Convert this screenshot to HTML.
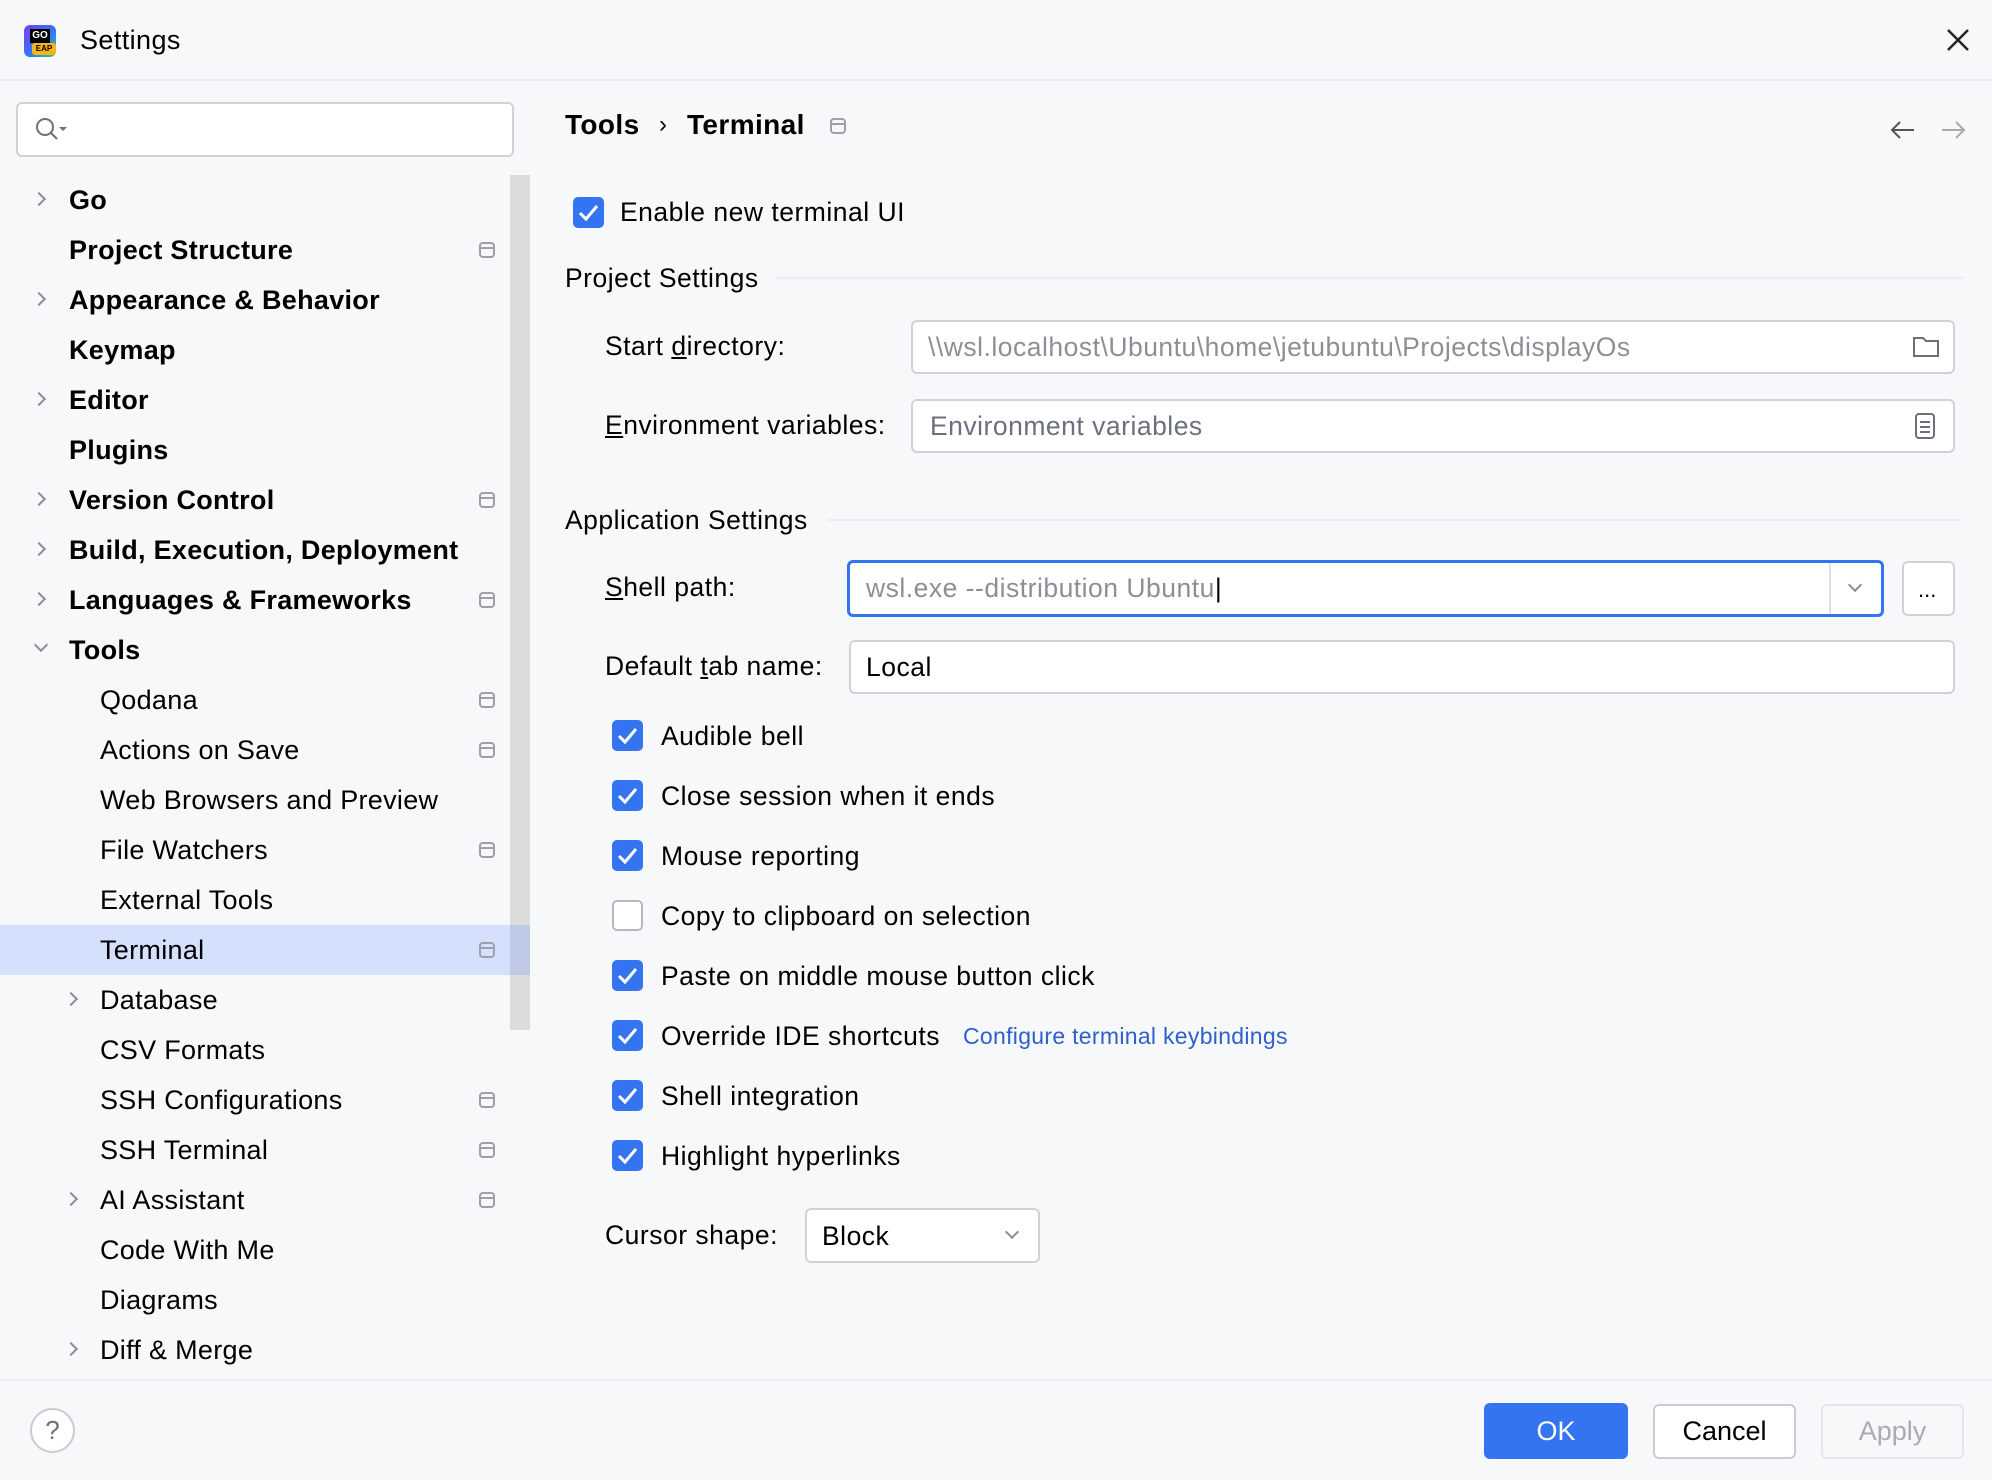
<!DOCTYPE html>
<html><head><meta charset="utf-8"><style>
*{box-sizing:border-box;margin:0;padding:0}
body{width:1992px;height:1480px;background:#f7f8fa;font-family:"Liberation Sans",sans-serif;color:#000;position:relative;overflow:hidden}
.a{position:absolute;white-space:nowrap}
.t{font-size:27px;line-height:50px;height:50px;letter-spacing:0.3px}
.b{font-weight:bold}
.cb{position:absolute;width:31px;height:31px;border-radius:5px;background:#3574f0}
.cb svg{position:absolute;left:5px;top:6px}
.cbo{position:absolute;width:31px;height:31px;border-radius:5px;border:2px solid #b4b8bf;background:#fff}
.lbl{font-size:26.5px;line-height:40px;height:40px;letter-spacing:0.5px}
.fld{position:absolute;background:#fff;border:2px solid #cfd2d8;border-radius:6px}
.pin{position:absolute;width:16px;height:16px;border:2px solid #9da0a8;border-radius:4px}
.pin:after{content:"";position:absolute;left:0;right:0;top:3px;border-top:2px solid #9da0a8}
.chev{position:absolute;width:10px;height:10px;border-right:2px solid #8c8f96;border-top:2px solid #8c8f96;transform:rotate(45deg)}
</style></head><body>
<div class="a" style="left:0;top:79px;width:1992px;border-top:2px solid #ebecf0"></div>
<div class="a" style="left:24px;top:25px;width:32px;height:32px;border-radius:6px;background:linear-gradient(135deg,#7b3df0,#2e7cf6 60%,#35d07f)"></div>
<div class="a" style="left:30px;top:29px;width:20px;height:14px;background:#000;color:#fff;font-size:10px;font-weight:bold;line-height:14px;text-align:center">GO</div>
<div class="a" style="left:32px;top:43px;width:24px;height:12px;background:#f8b515;border-radius:3px;color:#000;font-size:8px;font-weight:bold;line-height:12px;text-align:center">EAP</div>
<div class="a" style="left:80px;top:20px;font-size:27px;line-height:40px;letter-spacing:0.4px">Settings</div>
<svg class="a" style="left:1946px;top:28px" width="24" height="24"><path d="M2 2L22 22M22 2L2 22" stroke="#222" stroke-width="2.5"/></svg>

<div class="fld" style="left:16px;top:102px;width:498px;height:55px"></div>
<svg class="a" style="left:34px;top:116px" width="36" height="28"><circle cx="11" cy="11" r="8" fill="none" stroke="#6c707e" stroke-width="2"/><path d="M17 17L23 23" stroke="#6c707e" stroke-width="2"/><path d="M25 11h8l-4 4z" fill="#6c707e"/></svg>
<div class="a" style="left:510px;top:175px;width:20px;height:855px;background:#dcdcdd"></div>
<div class="a" style="left:0;top:925px;width:530px;height:50px;background:#d4e0fc"></div>
<div class="a" style="left:510px;top:925px;width:20px;height:50px;background:#bfcbe6"></div>

<div class="chev" style="left:34px;top:194px"></div><div class="a t b" style="left:69px;top:175px">Go</div>
<div class="a t b" style="left:69px;top:225px">Project Structure</div><div class="pin" style="left:479px;top:242px"></div>
<div class="chev" style="left:34px;top:294px"></div><div class="a t b" style="left:69px;top:275px">Appearance &amp; Behavior</div>
<div class="a t b" style="left:69px;top:325px">Keymap</div>
<div class="chev" style="left:34px;top:394px"></div><div class="a t b" style="left:69px;top:375px">Editor</div>
<div class="a t b" style="left:69px;top:425px">Plugins</div>
<div class="chev" style="left:34px;top:494px"></div><div class="a t b" style="left:69px;top:475px">Version Control</div><div class="pin" style="left:479px;top:492px"></div>
<div class="chev" style="left:34px;top:544px"></div><div class="a t b" style="left:69px;top:525px">Build, Execution, Deployment</div>
<div class="chev" style="left:34px;top:594px"></div><div class="a t b" style="left:69px;top:575px">Languages &amp; Frameworks</div><div class="pin" style="left:479px;top:592px"></div>
<div class="chev" style="left:36px;top:640px;transform:rotate(135deg)"></div><div class="a t b" style="left:69px;top:625px">Tools</div>
<div class="a t" style="left:100px;top:675px">Qodana</div><div class="pin" style="left:479px;top:692px"></div>
<div class="a t" style="left:100px;top:725px">Actions on Save</div><div class="pin" style="left:479px;top:742px"></div>
<div class="a t" style="left:100px;top:775px">Web Browsers and Preview</div>
<div class="a t" style="left:100px;top:825px">File Watchers</div><div class="pin" style="left:479px;top:842px"></div>
<div class="a t" style="left:100px;top:875px">External Tools</div>
<div class="a t" style="left:100px;top:925px">Terminal</div><div class="pin" style="left:479px;top:942px"></div>
<div class="chev" style="left:66px;top:994px"></div><div class="a t" style="left:100px;top:975px">Database</div>
<div class="a t" style="left:100px;top:1025px">CSV Formats</div>
<div class="a t" style="left:100px;top:1075px">SSH Configurations</div><div class="pin" style="left:479px;top:1092px"></div>
<div class="a t" style="left:100px;top:1125px">SSH Terminal</div><div class="pin" style="left:479px;top:1142px"></div>
<div class="chev" style="left:66px;top:1194px"></div><div class="a t" style="left:100px;top:1175px">AI Assistant</div><div class="pin" style="left:479px;top:1192px"></div>
<div class="a t" style="left:100px;top:1225px">Code With Me</div>
<div class="a t" style="left:100px;top:1275px">Diagrams</div>
<div class="chev" style="left:66px;top:1344px"></div><div class="a t" style="left:100px;top:1325px">Diff &amp; Merge</div>

<div class="a b" style="left:565px;top:105px;font-size:28px;line-height:40px;letter-spacing:0.4px">Tools</div>
<div class="a" style="left:659px;top:105px;font-size:24px;line-height:40px">›</div>
<div class="a b" style="left:687px;top:105px;font-size:28px;line-height:40px;letter-spacing:0.4px">Terminal</div>
<div class="pin" style="left:830px;top:118px"></div>
<svg class="a" style="left:1888px;top:118px" width="80" height="24"><path d="M26 12H4M12 4L4 12L12 20" fill="none" stroke="#555" stroke-width="2"/><path d="M54 12H76M68 4L76 12L68 20" fill="none" stroke="#aaa" stroke-width="2"/></svg>

<div class="cb" style="left:573px;top:197px"><svg width="21" height="19"><path d="M2 10L8 16L19 3" fill="none" stroke="#fff" stroke-width="3"/></svg></div>
<div class="a lbl" style="left:620px;top:192px">Enable new terminal UI</div>

<div class="a lbl" style="left:565px;top:258px">Project Settings</div>
<div class="a" style="left:775px;top:277px;width:1188px;border-top:2px solid #ebecf0"></div>
<div class="a lbl" style="left:605px;top:326px">Start <u>d</u>irectory:</div>
<div class="fld" style="left:911px;top:320px;width:1044px;height:54px"></div>
<div class="a lbl" style="left:928px;top:327px;color:#8c8f96">\\wsl.localhost\Ubuntu\home\jetubuntu\Projects\displayOs</div>
<svg class="a" style="left:1912px;top:334px" width="28" height="24"><path d="M2 4h9l3 3h12v15H2z" fill="none" stroke="#6c707e" stroke-width="2"/></svg>
<div class="a lbl" style="left:605px;top:405px"><u>E</u>nvironment variables:</div>
<div class="fld" style="left:911px;top:399px;width:1044px;height:54px"></div>
<div class="a lbl" style="left:930px;top:406px;color:#6c707e">Environment variables</div>
<svg class="a" style="left:1914px;top:412px" width="22" height="28"><rect x="2" y="2" width="18" height="24" rx="3" fill="none" stroke="#6c707e" stroke-width="2"/><path d="M6 10h10M6 15h10M6 20h10" stroke="#6c707e" stroke-width="2"/></svg>

<div class="a lbl" style="left:565px;top:500px">Application Settings</div>
<div class="a" style="left:828px;top:519px;width:1135px;border-top:2px solid #ebecf0"></div>
<div class="a lbl" style="left:605px;top:567px"><u>S</u>hell path:</div>
<div class="fld" style="left:847px;top:560px;width:1037px;height:57px;border:3px solid #3574f0"></div>
<div class="a" style="left:1829px;top:563px;height:51px;border-left:2px solid #dfe1e5"></div>
<div class="a lbl" style="left:866px;top:568px;color:#8c8f96">wsl.exe --distribution Ubuntu<span style="color:#000;font-weight:normal">|</span></div>
<div class="chev" style="left:1850px;top:580px;transform:rotate(135deg)"></div>
<div class="fld" style="left:1902px;top:561px;width:53px;height:55px"></div>
<div class="a" style="left:1918px;top:575px;font-size:22px;line-height:30px">...</div>
<div class="a lbl" style="left:605px;top:646px">Default <u>t</u>ab name:</div>
<div class="fld" style="left:849px;top:640px;width:1106px;height:54px"></div>
<div class="a lbl" style="left:866px;top:647px">Local</div>

<div class="cb" style="left:612px;top:720px"><svg width="21" height="19"><path d="M2 10L8 16L19 3" fill="none" stroke="#fff" stroke-width="3"/></svg></div><div class="a lbl" style="left:661px;top:716px">Audible bell</div>
<div class="cb" style="left:612px;top:780px"><svg width="21" height="19"><path d="M2 10L8 16L19 3" fill="none" stroke="#fff" stroke-width="3"/></svg></div><div class="a lbl" style="left:661px;top:776px">Close session when it ends</div>
<div class="cb" style="left:612px;top:840px"><svg width="21" height="19"><path d="M2 10L8 16L19 3" fill="none" stroke="#fff" stroke-width="3"/></svg></div><div class="a lbl" style="left:661px;top:836px">Mouse reporting</div>
<div class="cbo" style="left:612px;top:900px"></div><div class="a lbl" style="left:661px;top:896px">Copy to clipboard on selection</div>
<div class="cb" style="left:612px;top:960px"><svg width="21" height="19"><path d="M2 10L8 16L19 3" fill="none" stroke="#fff" stroke-width="3"/></svg></div><div class="a lbl" style="left:661px;top:956px">Paste on middle mouse button click</div>
<div class="cb" style="left:612px;top:1020px"><svg width="21" height="19"><path d="M2 10L8 16L19 3" fill="none" stroke="#fff" stroke-width="3"/></svg></div><div class="a lbl" style="left:661px;top:1016px">Override IDE shortcuts</div>
<div class="a" style="left:963px;top:1018px;font-size:23px;line-height:36px;color:#2e5fcf;letter-spacing:0.3px">Configure terminal keybindings</div>
<div class="cb" style="left:612px;top:1080px"><svg width="21" height="19"><path d="M2 10L8 16L19 3" fill="none" stroke="#fff" stroke-width="3"/></svg></div><div class="a lbl" style="left:661px;top:1076px">Shell integration</div>
<div class="cb" style="left:612px;top:1140px"><svg width="21" height="19"><path d="M2 10L8 16L19 3" fill="none" stroke="#fff" stroke-width="3"/></svg></div><div class="a lbl" style="left:661px;top:1136px">Highlight hyperlinks</div>

<div class="a lbl" style="left:605px;top:1215px">Cursor shape:</div>
<div class="fld" style="left:805px;top:1208px;width:235px;height:55px"></div>
<div class="a lbl" style="left:822px;top:1216px">Block</div>
<div class="chev" style="left:1007px;top:1227px;transform:rotate(135deg)"></div>

<div class="a" style="left:0;top:1379px;width:1992px;border-top:2px solid #ebecf0"></div>
<div class="a" style="left:30px;top:1408px;width:45px;height:45px;border-radius:50%;border:2px solid #c9ccd3;background:#fff;text-align:center;font-size:26px;line-height:41px;color:#6c707e">?</div>
<div class="a" style="left:1484px;top:1403px;width:144px;height:56px;border-radius:6px;background:#3574f0;color:#fff;font-size:27px;line-height:56px;text-align:center">OK</div>
<div class="a" style="left:1653px;top:1404px;width:143px;height:55px;border-radius:6px;background:#fff;border:2px solid #c9ccd6;font-size:27px;line-height:51px;text-align:center">Cancel</div>
<div class="a" style="left:1821px;top:1404px;width:143px;height:55px;border-radius:6px;border:2px solid #e4e6ea;color:#a8abb3;font-size:27px;line-height:51px;text-align:center">Apply</div>
</body></html>
